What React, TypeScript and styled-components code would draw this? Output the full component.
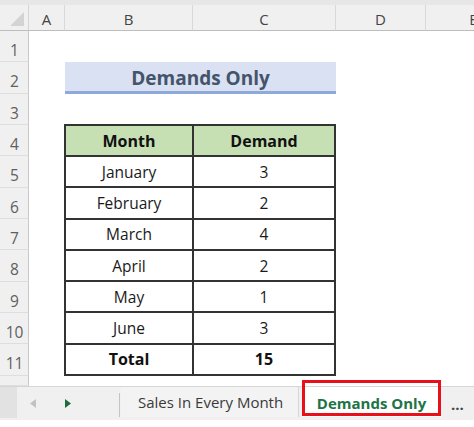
import React from "react";
import styled, { createGlobalStyle, css } from "styled-components";

const Global = createGlobalStyle`
  html, body { margin: 0; padding: 0; background: #ffffff; }
  body { font-family: "Open Sans", "Noto Sans", sans-serif; }
  * { box-sizing: border-box; }
`;

const Page = styled.div`
  width: 474px;
  height: 427px;
  display: flex;
  flex-direction: column;
  overflow: hidden;
  background: #ffffff;
`;

const TopBand = styled.div`
  height: 5px;
  flex: none;
  background: #e7e7e7;
`;

const Sheet = styled.div`
  flex: 1;
  display: grid;
  grid-template-columns: 29px 36px 128px 143px 90px 96px;
  grid-template-rows: 26px repeat(11, 31.35px) 1fr;
  min-height: 0;
  overflow: hidden;
  background: #ffffff;
`;

const Corner = styled.div`
  grid-column: 1;
  grid-row: 1;
  background: #f0f0f0;
  border-right: 1px solid #d4d4d4;
  border-bottom: 1px solid #bdbdbd;
  display: flex;
  align-items: flex-end;
  justify-content: flex-end;
  padding: 0 4px 4px 0;
`;

const ColHeader = styled.div<{ $col: number }>`
  grid-column: ${(p) => p.$col};
  grid-row: 1;
  background: #f0f0f0;
  border-right: 1px solid #d8d8d8;
  border-bottom: 1px solid #bdbdbd;
  display: flex;
  align-items: center;
  justify-content: center;
  font-size: 15px;
  color: #444444;
  padding-top: 2px;
`;

const RowHeader = styled.div<{ $row: number }>`
  grid-column: 1;
  grid-row: ${(p) => p.$row};
  background: #f0f0f0;
  border-right: 1px solid #c8c8c8;
  border-bottom: 1px solid #dedede;
  display: flex;
  align-items: flex-end;
  justify-content: center;
  font-size: 15.5px;
  color: #5f5f5f;
  padding-bottom: 3px;
  line-height: 1;
  padding-left: 1px;
`;

const Title = styled.div`
  grid-column: 3 / span 2;
  grid-row: 3;
  background: #d9e1f2;
  border-bottom: 3px solid #8ea9db;
  display: flex;
  align-items: center;
  justify-content: center;
  font-weight: 700;
  font-size: 19px;
  color: #44546a;
  padding-top: 2px;
`;

const Table = styled.div`
  grid-column: 3 / span 2;
  grid-row: 5 / 13;
  display: grid;
  grid-template-columns: 128px 1fr;
  grid-template-rows: repeat(8, 1fr);
  border-top: 2px solid #333333;
  border-left: 2px solid #333333;
  margin: -1px 0 0 -1px;
`;

const Cell = styled.div<{ $head?: boolean; $bold?: boolean }>`
  border-right: 2px solid #333333;
  border-bottom: 2px solid #333333;
  display: flex;
  align-items: center;
  justify-content: center;
  font-size: 15.5px;
  color: #1a1a1a;
  background: #ffffff;
  ${(p) =>
    p.$head &&
    css`
      background: #c6e0b4;
      font-weight: 700;
      font-size: 16px;
      color: #111111;
    `}
  ${(p) =>
    p.$bold &&
    css`
      font-weight: 700;
      font-size: 16px;
      color: #111111;
    `}
`;

const TabBar = styled.div`
  height: 34px;
  flex: none;
  display: flex;
  align-items: stretch;
  background: #f0f0f0;
  border-top: 1px solid #d6d6d6;
`;

const LeftBlock = styled.div`
  width: 17px;
  background: #e2e2e2;
  margin-bottom: 2px;
`;

const NavArea = styled.div`
  width: 102px;
  display: flex;
  align-items: center;
  padding-left: 13px;
  gap: 29px;
`;

const Arrow = styled.svg`
  width: 6px;
  height: 9px;
  flex: none;
`;

const Separator = styled.div`
  width: 1px;
  background: #c4c4c4;
  margin: 6px 1px 3px 0;
`;

const Tab = styled.div`
  width: 178px;
  display: flex;
  align-items: center;
  padding-left: 17px;
  font-size: 15px;
  color: #3a3a3a;
  white-space: nowrap;
  background: #f3f3f3;
  border-right: 1px solid #d6d6d6;
  margin-bottom: 3px;
`;

const ActiveTab = styled.div`
  position: relative;
  width: 139px;
  margin-left: 3px;
  margin-bottom: 3px;
  display: flex;
  align-items: center;
  justify-content: center;
  font-size: 15px;
  font-weight: 700;
  color: #217346;
  background: #ffffff;
  white-space: nowrap;
  padding-top: 1px;
  &::after {
    content: "";
    position: absolute;
    left: 0;
    right: 0;
    top: -7px;
    bottom: 1px;
    border: 3px solid #e8101a;
    pointer-events: none;
  }
`;

const More = styled.div`
  display: flex;
  align-items: center;
  padding-left: 10px;
  font-size: 15px;
  font-weight: 700;
  color: #444444;
`;

const BottomStrip = styled.div`
  height: 7px;
  flex: none;
  background: #ffffff;
`;

const columns = ["A", "B", "C", "D", "E"];
const data: [string, string][] = [
  ["January", "3"],
  ["February", "2"],
  ["March", "4"],
  ["April", "2"],
  ["May", "1"],
  ["June", "3"],
];

export default function App() {
  return (
    <Page>
      <Global />
      <TopBand />
      <Sheet>
        <Corner>
          <svg width="14" height="14" viewBox="0 0 14 14">
            <polygon points="14,0 14,14 0,14" fill="#d3d3d3" />
          </svg>
        </Corner>
        {columns.map((c, i) => (
          <ColHeader key={c} $col={i + 2}>
            {c}
          </ColHeader>
        ))}
        {Array.from({ length: 11 }, (_, i) => (
          <RowHeader key={i} $row={i + 2}>
            {i + 1}
          </RowHeader>
        ))}
        <RowHeader $row={13} />
        <Title>Demands Only</Title>
        <Table>
          <Cell $head>Month</Cell>
          <Cell $head>Demand</Cell>
          {data.map(([m, d]) => (
            <React.Fragment key={m}>
              <Cell>{m}</Cell>
              <Cell>{d}</Cell>
            </React.Fragment>
          ))}
          <Cell $bold>Total</Cell>
          <Cell $bold>15</Cell>
        </Table>
      </Sheet>
      <TabBar>
        <LeftBlock />
        <NavArea>
          <Arrow viewBox="0 0 6 9">
            <polygon points="6,0 6,9 0,4.5" fill="#c2c2c2" />
          </Arrow>
          <Arrow viewBox="0 0 6 9">
            <polygon points="0,0 0,9 6,4.5" fill="#1e6b3f" />
          </Arrow>
        </NavArea>
        <Separator />
        <Tab>Sales In Every Month</Tab>
        <ActiveTab>Demands Only</ActiveTab>
        <More>...</More>
      </TabBar>
      <BottomStrip />
    </Page>
  );
}
